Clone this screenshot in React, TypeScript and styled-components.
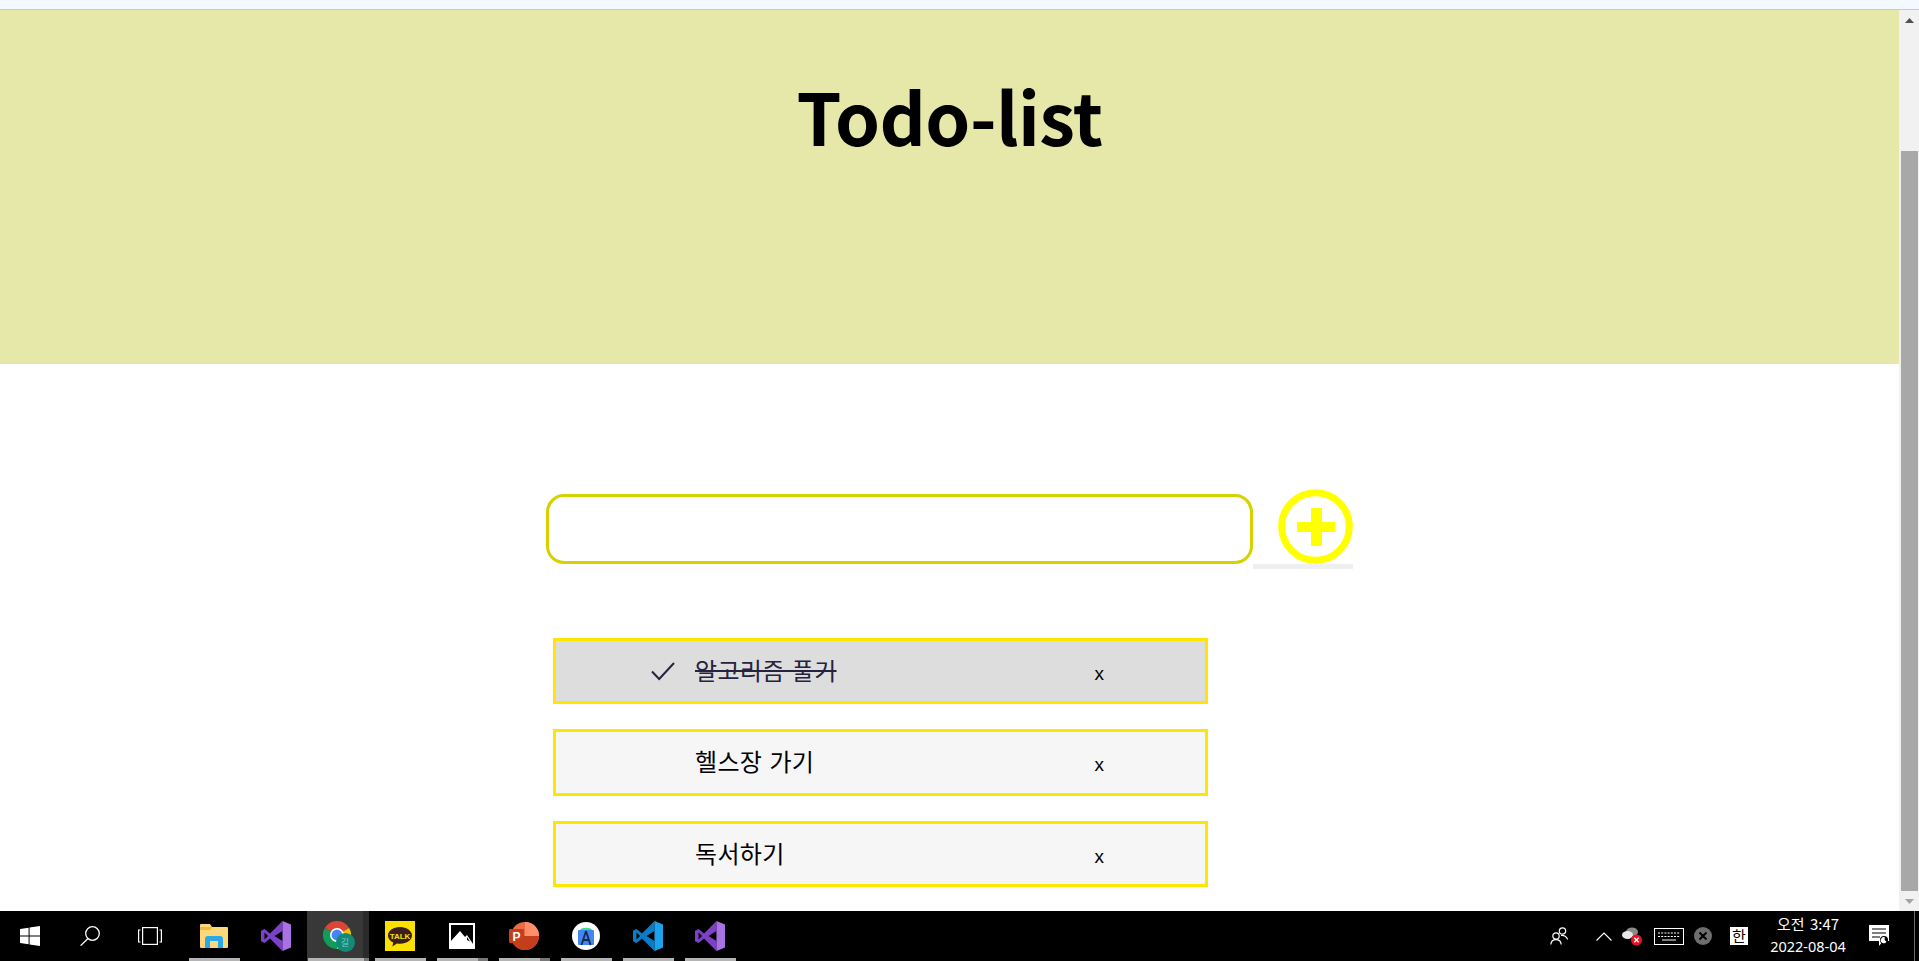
import React from "react";
import styled, { createGlobalStyle } from "styled-components";

const Global = createGlobalStyle`
  html, body { margin: 0; padding: 0; height: 100%; overflow: hidden; background: #fff; }
  #root { height: 100%; }
  * { box-sizing: border-box; }
`;

const KR = `"Noto Sans CJK KR", "Noto Sans", sans-serif`;

const Page = styled.div`
  height: 961px;
  display: flex;
  flex-direction: column;
  font-family: ${KR};
`;
const TopStrip = styled.div`
  height: 10px;
  flex: none;
  background: #f4f8ff;
  border-bottom: 1px solid #c6c8d8;
`;
const Middle = styled.div`
  flex: 1;
  min-height: 0;
  display: flex;
`;
const Content = styled.main`
  flex: 1;
  min-width: 0;
  background: #fff;
`;
const Banner = styled.header`
  height: 354px;
  background: #e6e8aa;
  display: flex;
  justify-content: center;
  align-items: flex-start;
  padding-top: 52px;
`;
const Title = styled.h1`
  margin: 0;
  font-size: 72px;
  line-height: 106px;
  font-weight: 700;
  color: #000;
  letter-spacing: -0.6px;
`;
const InputRow = styled.form`
  display: flex;
  align-items: flex-start;
  margin: 125px 0 0 546px;
`;
const TodoInput = styled.input`
  width: 707px;
  height: 70px;
  margin-top: 5px;
  border: 3px solid #d6d200;
  border-radius: 18px;
  background: #fff;
  outline: none;
`;
const AddButton = styled.button`
  width: 100px;
  height: 80px;
  padding: 0;
  background: #fff;
  border: none;
  border-bottom: 5px solid #efefef;
  display: flex;
  justify-content: flex-end;
`;
const List = styled.ul`
  list-style: none;
  margin: 69px 0 0 553px;
  padding: 0;
  width: 655px;
  display: flex;
  flex-direction: column;
  gap: 25px;
`;
const Row = styled.li<{ $done?: boolean }>`
  height: 66px;
  border: 3px solid #ffe600;
  background: ${(p) => (p.$done ? "#dddddd" : "#f6f6f6")};
  display: flex;
  align-items: center;
  padding: 0 101px 0 95px;
  color: ${(p) => (p.$done ? "#26223f" : "#000")};
  &:nth-child(2) { height: 67px; }
`;
const CheckSlot = styled.span`
  width: 44px;
  flex: none;
  display: flex;
`;
const TodoText = styled.span<{ $done?: boolean }>`
  flex: 1;
  font-size: 24px;
  line-height: 34px;
  letter-spacing: 0.3px;
  word-spacing: 1.6px;
  padding-bottom: 3px;
  text-decoration: ${(p) => (p.$done ? "line-through" : "none")};
  text-decoration-thickness: 2px;
`;
const Remove = styled.span`
  font-family: "Liberation Sans", sans-serif;
  font-size: 19px;
  line-height: 20px;
  padding: 5px 0 0 0;
  color: #000;
`;

const Scrollbar = styled.div`
  width: 20px;
  flex: none;
  background: #f1f1f1;
  display: flex;
  flex-direction: column;
`;
const ArrowButton = styled.div`
  height: 20px;
  flex: none;
  display: flex;
  align-items: center;
  justify-content: center;
`;
const Thumb = styled.div`
  height: 740px;
  margin: 121px 1px 0 2px;
  background: #a8a8a8;
`;

const Taskbar = styled.footer`
  height: 50px;
  flex: none;
  background: #000;
  display: flex;
  align-items: stretch;
`;
const SystemSlot = styled.div`
  width: 60px;
  flex: none;
  display: flex;
  align-items: center;
  justify-content: center;
`;
const Apps = styled.div`
  display: flex;
  margin-left: 3px;
`;
const AppSlot = styled.div<{ $active?: boolean; $stacked?: boolean; $open?: boolean }>`
  position: relative;
  width: 62px;
  flex: none;
  display: flex;
  align-items: center;
  justify-content: center;
  background: ${(p) =>
    p.$active ? "linear-gradient(90deg, #383838 0 91%, #2a2a2a 91% 100%)" : "transparent"};
  &::after {
    content: "";
    position: absolute;
    bottom: 0;
    left: ${(p) => (p.$active ? "1px" : "6px")};
    right: ${(p) => (p.$active ? "0" : "5px")};
    height: 3px;
    display: ${(p) => (p.$open === false ? "none" : "block")};
    background: ${(p) =>
      p.$active
        ? "linear-gradient(90deg, #b4b4b4 0 91%, #777 91% 100%)"
        : p.$stacked
          ? "linear-gradient(90deg, #b4b4b4 0 80%, #777 80% 100%)"
          : "#b4b4b4"};
  }
`;
const Tray = styled.div`
  margin-left: auto;
  display: flex;
  align-items: stretch;
`;
const TraySlot = styled.div<{ $w: number; $gap?: number }>`
  width: ${(p) => p.$w}px;
  margin-left: ${(p) => p.$gap ?? 0}px;
  flex: none;
  display: flex;
  align-items: center;
  justify-content: center;
  color: #fff;
`;
const Clock = styled.div`
  width: 88px;
  flex: none;
  display: flex;
  flex-direction: column;
  align-items: center;
  color: #fff;
  font-size: 15px;
  line-height: 22px;
  padding-top: 2px;
  white-space: nowrap;
  word-spacing: 2px;
`;
const ClockDate = styled.span`
  font-family: "Noto Sans", sans-serif;
  font-size: 14.5px;
`;
const ImeBox = styled.span`
  width: 18px;
  height: 18px;
  background: #fff;
  color: #000;
  font-size: 15px;
  line-height: 18px;
  text-align: center;
`;
const ShowDesktop = styled.div`
  width: 5px;
  margin-left: 8px;
  flex: none;
  border-left: 1px solid #6b6b6b;
`;
const ChromeWrap = styled.span`
  position: relative;
  width: 31px;
  height: 30px;
  display: block;
`;
const ChromeBadge = styled.span`
  position: absolute;
  right: -1px;
  bottom: -1px;
  width: 19px;
  height: 19px;
  border-radius: 50%;
  background: #128a78;
  color: #7fc8b8;
  font-size: 9px;
  line-height: 19px;
  text-align: center;
`;

const VsLogo = ({ a, b, w = 30 }: { a: string; b: string; w?: number }) => (
  <svg width={w} height="30" viewBox="0 0 30 30">
    <path d="M21.500 0 9 12.500 3.500 8 0 9.700v10.600L3.500 22 9 17.500 21.500 30V20L13.500 15l8-5z" fill={a} />
    <path d="M3.500 11.500v7l3.600-3.500z" fill="#000" />
    <path d="M21.500 0 30 3.600v22.800L21.500 30z" fill={b} />
  </svg>
);

const todos = [
  { id: 1, text: "알고리즘 풀기", done: true },
  { id: 2, text: "헬스장 가기", done: false },
  { id: 3, text: "독서하기", done: false },
];

export default function App() {
  return (
    <Page>
      <Global />
      <TopStrip />
      <Middle>
        <Content>
          <Banner>
            <Title>Todo-list</Title>
          </Banner>
          <InputRow onSubmit={(e) => e.preventDefault()}>
            <TodoInput aria-label="todo" />
            <AddButton type="button" aria-label="add">
              <svg width="75" height="75" viewBox="0 0 75 75">
                <circle cx="37.500" cy="37.500" r="33.800" fill="none" stroke="#ffff00" strokeWidth="7" />
                <path d="M33 19h11v14h13v10H44v14H33V43H19V33h14z" fill="#ffff00" />
              </svg>
            </AddButton>
          </InputRow>
          <List>
            {todos.map((t) => (
              <Row key={t.id} $done={t.done}>
                <CheckSlot>
                  {t.done && (
                    <svg width="24" height="20" viewBox="0 0 24 20">
                      <path d="M1 10.500 8.200 18 23 2" fill="none" stroke="#26223f" strokeWidth="2" />
                    </svg>
                  )}
                </CheckSlot>
                <TodoText $done={t.done}>{t.text}</TodoText>
                <Remove>x</Remove>
              </Row>
            ))}
          </List>
        </Content>
        <Scrollbar>
          <ArrowButton>
            <svg width="9" height="5" viewBox="0 0 9 5"><path d="M4.500 0 9 5H0z" fill="#505050" /></svg>
          </ArrowButton>
          <Thumb />
          <ArrowButton>
            <svg width="9" height="5" viewBox="0 0 9 5"><path d="M0 0h9L4.500 5z" fill="#a3a3a3" /></svg>
          </ArrowButton>
        </Scrollbar>
      </Middle>
      <Taskbar>
        <SystemSlot>
          <svg width="20" height="20" viewBox="0 0 20 20">
            <path d="M0 3 8.600 1.700v7.800H0zM9.600 1.600 20 0v9.500H9.600zM0 10.500h8.600v7.800L0 17zM9.600 10.500H20V20L9.600 18.400z" fill="#fff" />
          </svg>
        </SystemSlot>
        <SystemSlot>
          <svg width="20" height="20" viewBox="0 0 20 20" fill="none" stroke="#fff" strokeWidth="1.300">
            <circle cx="12.500" cy="7.500" r="6.800" />
            <path d="M8 12.500.6 19.600" />
          </svg>
        </SystemSlot>
        <SystemSlot>
          <svg width="24" height="18" viewBox="0 0 24 18" fill="none" stroke="#fff" strokeWidth="1.200">
            <rect x="4.600" y="0.600" width="14.800" height="16.800" />
            <path d="M2.500 3H.6v12h1.900M21.500 3h1.900v12h-1.900" />
          </svg>
        </SystemSlot>
        <Apps>
          <AppSlot>
            <svg width="28" height="24" viewBox="0 0 28 24">
              <path d="M1 0h9l2 3h15a1 1 0 0 1 1 1v19a1 1 0 0 1-1 1H1a1 1 0 0 1-1-1V1a1 1 0 0 1 1-1z" fill="#fdd87a" />
              <path d="M0 6h10l2-3H0z" fill="#f0b93e" />
              <path d="M5 24v-9a3 3 0 0 1 3-3h12a3 3 0 0 1 3 3v9h-5v-7h-8v7z" fill="#2ba9e6" />
            </svg>
          </AppSlot>
          <AppSlot $open={false}>
            <VsLogo a="#7d41c8" b="#a871e4" />
          </AppSlot>
          <AppSlot $active>
            <ChromeWrap>
              <svg width="28" height="28" viewBox="0 0 30 30">
                <path d="M15 15 2 7.500A15 15 0 0 1 28 7.500z" fill="#db4437" />
                <path d="M15 15 28 7.500A15 15 0 0 1 15 30z" fill="#f4c20d" />
                <path d="M15 15V30A15 15 0 0 1 2 7.500z" fill="#0f9d58" />
                <circle cx="15" cy="15" r="7.500" fill="#fff" />
                <circle cx="15" cy="15" r="5.800" fill="#4285f4" />
              </svg>
              <ChromeBadge>길</ChromeBadge>
            </ChromeWrap>
          </AppSlot>
          <AppSlot>
            <svg width="30" height="30" viewBox="0 0 30 30">
              <rect width="30" height="30" fill="#fae100" />
              <path d="M15 6C8 6 3 9.800 3 14.500c0 3 2 5.600 5.200 7.100L7.400 25.500l4.600-3c1 .2 2 .3 3 .3 7 0 12-3.900 12-8.300S22 6 15 6z" fill="#3c1e1e" />
              <text x="15" y="17.500" textAnchor="middle" fontFamily="Liberation Sans, sans-serif" fontWeight="700" fontSize="8" fill="#fae100">TALK</text>
            </svg>
          </AppSlot>
          <AppSlot $stacked>
            <svg width="26" height="26" viewBox="0 0 26 26">
              <rect width="26" height="26" fill="#fff" />
              <rect x="2" y="2" width="22" height="22" fill="#000" />
              <path d="M2 24V18L11 8l5 6 2-2 6 9v3z" fill="#fff" />
              <path d="M18 14l3 4.500-3-1.500z" fill="#000" />
            </svg>
          </AppSlot>
          <AppSlot $stacked>
            <svg width="30" height="28" viewBox="0 0 30 28">
              <circle cx="16" cy="14" r="14" fill="#ed6c47" />
              <path d="M16 0a14 14 0 0 1 14 14H16z" fill="#ff8f6b" />
              <path d="M2 14h28a14 14 0 0 1-28 0z" fill="#c43e1c" />
              <rect x="0" y="7" width="15" height="14" rx="1" fill="#c43e1c" />
              <text x="7.500" y="18.500" textAnchor="middle" fontFamily="Liberation Sans, sans-serif" fontWeight="700" fontSize="12" fill="#fff">P</text>
            </svg>
          </AppSlot>
          <AppSlot>
            <svg width="28" height="28" viewBox="0 0 28 28">
              <circle cx="14" cy="14" r="14" fill="#fff" />
              <rect x="6" y="8" width="16" height="15" rx="1" fill="#4285f4" />
              <path d="M8 8c1-3 11-3 12 0z" fill="#3ddc84" />
              <path d="M14 9 9.500 23M14 9l4.500 14M11 18h6" fill="none" stroke="#1b2a4a" strokeWidth="1.800" />
            </svg>
          </AppSlot>
          <AppSlot>
            <VsLogo a="#0a7cc8" b="#1ea1ea" />
          </AppSlot>
          <AppSlot>
            <VsLogo a="#7d41c8" b="#a871e4" />
          </AppSlot>
        </Apps>
        <Tray>
          <TraySlot $w={46}>
            <svg width="18" height="18" viewBox="0 0 18 18" fill="none" stroke="#fff" strokeWidth="1.200">
              <circle cx="6" cy="9" r="3.200" />
              <path d="M.8 17.500c.3-3 2.300-4.800 5.200-4.800s4.900 1.800 5.200 4.800" />
              <circle cx="12.500" cy="4" r="3.200" />
              <path d="M11 8.500c3-.5 6 1 6.500 4" />
            </svg>
          </TraySlot>
          <TraySlot $w={28} $gap={8}>
            <svg width="16" height="9" viewBox="0 0 16 9" fill="none" stroke="#fff" strokeWidth="1.100">
              <path d="M.5 8.500 8 1l7.500 7.500" />
            </svg>
          </TraySlot>
          <TraySlot $w={28}>
            <svg width="20" height="20" viewBox="0 0 20 20">
              <ellipse cx="10" cy="6" rx="6" ry="4.500" fill="#8a8a8a" />
              <ellipse cx="5.500" cy="9" rx="5.500" ry="4" fill="#e8e8e8" />
              <circle cx="14.500" cy="14" r="5.500" fill="#e81123" />
              <path d="M12.300 11.800l4.400 4.400M16.700 11.800l-4.400 4.400" stroke="#fff" strokeWidth="1.300" />
            </svg>
          </TraySlot>
          <TraySlot $w={46}>
            <svg width="30" height="17" viewBox="0 0 30 17" fill="none" stroke="#fff">
              <rect x="0.500" y="0.500" width="29" height="16" />
              <path d="M4 5h22M4 8.500h22" strokeDasharray="2 1.200" />
              <path d="M8 12h14" />
            </svg>
          </TraySlot>
          <TraySlot $w={22}>
            <svg width="18" height="18" viewBox="0 0 18 18">
              <circle cx="9" cy="9" r="9" fill="#6e6e6e" />
              <path d="M5.500 5.500l7 7M12.500 5.500l-7 7" stroke="#000" strokeWidth="2" />
            </svg>
          </TraySlot>
          <TraySlot $w={50}>
            <ImeBox>한</ImeBox>
          </TraySlot>
          <Clock>
            <span>오전 3:47</span>
            <ClockDate>2022-08-04</ClockDate>
          </Clock>
          <TraySlot $w={54}>
            <svg width="20" height="22" viewBox="0 0 20 22">
              <path d="M0 0h20v16h-6l-4 5v-5H0z" fill="#fff" />
              <path d="M3 4h14M3 8h14M3 12h8" stroke="#000" strokeWidth="1.200" />
              <circle cx="15" cy="15" r="4" fill="#000" />
              <path d="M16 12.500a3 3 0 1 0 1.500 4 3 3 0 0 1-1.500-4z" fill="#fff" />
            </svg>
          </TraySlot>
          <ShowDesktop />
        </Tray>
      </Taskbar>
    </Page>
  );
}
